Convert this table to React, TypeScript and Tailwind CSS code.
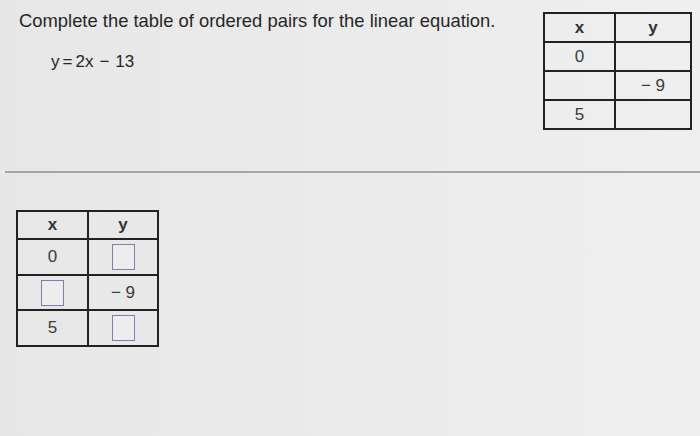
import React from "react";

function InputBox() {
  return <div className="w-[23px] h-[26px] border-[1.5px] border-[#7d80ac] bg-[#ededed]" />;
}

const topRows = [
  ["0", ""],
  ["", "− 9"],
  ["5", ""],
];

function TopTable() {
  return (
    <table className="border-collapse border-2 border-[#222] text-[17px] text-[#3a3a3a] self-start mt-[12px]">
      <thead>
        <tr className="h-[29px]">
          <th className="w-[71px] border-2 border-[#222] font-bold text-[#333] text-center">x</th>
          <th className="w-[76px] border-2 border-[#222] font-bold text-[#333] text-center">y</th>
        </tr>
      </thead>
      <tbody>
        {topRows.map((r, i) => (
          <tr key={i} className="h-[29px]">
            <td className="border-2 border-[#222] text-center">{r[0]}</td>
            <td className="border-2 border-[#222] text-center">{r[1]}</td>
          </tr>
        ))}
      </tbody>
    </table>
  );
}

function AnswerTable() {
  const cell = "border-2 border-[#222] text-center align-middle";
  return (
    <table className="border-collapse border-2 border-[#222] text-[17px] text-[#3a3a3a]">
      <thead>
        <tr className="h-[28px]">
          <th className={`w-[71px] font-bold text-[#333] ${cell}`}>x</th>
          <th className={`w-[70px] font-bold text-[#333] ${cell}`}>y</th>
        </tr>
      </thead>
      <tbody>
        <tr className="h-[36px]">
          <td className={cell}>0</td>
          <td className={cell}>
            <div className="flex justify-center"><InputBox /></div>
          </td>
        </tr>
        <tr className="h-[35px]">
          <td className={cell}>
            <div className="flex justify-center"><InputBox /></div>
          </td>
          <td className={cell}>− 9</td>
        </tr>
        <tr className="h-[36px]">
          <td className={cell}>5</td>
          <td className={cell}>
            <div className="flex justify-center"><InputBox /></div>
          </td>
        </tr>
      </tbody>
    </table>
  );
}

export default function App() {
  return (
    <div
      className="w-[700px] h-[436px] overflow-hidden bg-gradient-to-r from-[#e7e7e7] to-[#efefef] text-[#2d2d2d]"
      style={{ fontFamily: '"Liberation Sans", Arial, sans-serif' }}
    >
      <div className="flex justify-between pl-[19px] pr-[8px]">
        <div className="pt-[10px]">
          <p className="text-[18.4px] leading-[22px] text-[#262626]">
            Complete the table of ordered pairs for the linear equation.
          </p>
          <p className="mt-[20px] ml-[32px] text-[17px] leading-[20px] text-[#262626]">
            y<span className="mx-[3px]">=</span>2x<span className="mx-[6px]">−</span>13
          </p>
        </div>
        <TopTable />
      </div>

      <div className="mt-[41px] ml-[5px] h-[2px] bg-[#a5a5a5]" />

      <div className="mt-[37px] ml-[16px]">
        <AnswerTable />
      </div>
    </div>
  );
}
